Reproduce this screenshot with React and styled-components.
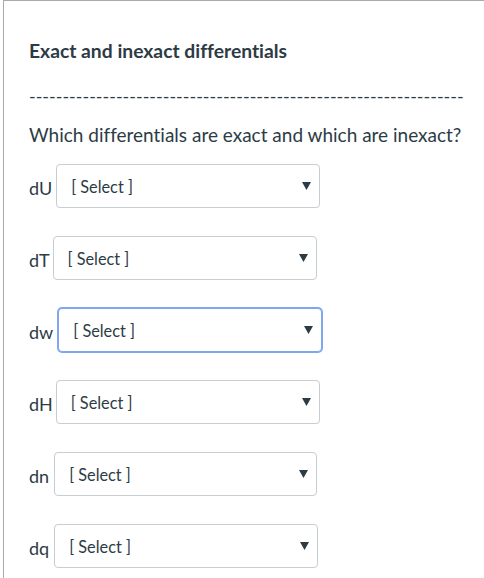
import React from "react";
import styled, { createGlobalStyle } from "styled-components";

const Global = createGlobalStyle`
  html, body { margin: 0; padding: 0; background: #fff; }
  body {
    font-family: Lato, "Noto Sans", sans-serif;
    color: #2d3b45;
    font-variant-ligatures: none;
    font-feature-settings: "liga" 0;
  }
`;

const Frame = styled.div`
  margin-left: 3px;
  border-left: 1px solid #aaaaaa;
  border-top: 1px solid #aaaaaa;
  padding: 38px 0 20px 25px;
  min-height: 539px;
`;

const Title = styled.h2`
  margin: 0;
  font-size: 19.3px;
  font-weight: 700;
  line-height: 24px;
  color: #2d3b45;
`;

const Dashes = styled.div`
  margin-top: 21px;
  font-size: 18px;
  line-height: 24px;
  white-space: nowrap;
`;

const Question = styled.p`
  margin: 15px 0 0;
  font-size: 19px;
  line-height: 24px;
`;

const Rows = styled.div`
  margin-top: 17px;
  display: flex;
  flex-direction: column;
  gap: 28px;
`;

const Row = styled.div`
  display: flex;
  align-items: center;
  gap: ${(p) => p.$gap}px;
`;

const Label = styled.span`
  font-size: 18px;
  line-height: 24px;
  padding-top: 4px;
`;

const SelectBox = styled.div`
  box-sizing: border-box;
  width: ${(p) => p.$w}px;
  height: 44px;
  border: 1px solid ${(p) => (p.$focus ? "#7fa7f0" : "#c7cdd1")};
  box-shadow: ${(p) => (p.$focus ? "0 0 0 1px #7fa7f0" : "none")};
  border-radius: 4px;
  background: #fff;
  display: flex;
  align-items: center;
  justify-content: space-between;
  padding: 0 8px 0 14px;
  font-size: 16.3px;
`;

const SelectText = styled.span`
  line-height: 20px;
  padding-top: 1px;
`;

const Arrow = () => (
  <svg width="9" height="8" viewBox="0 0 9 8">
    <polygon points="0,0 9,0 4.5,8" fill="#2d3b45" />
  </svg>
);

const items = [
  { l: "dU", gap: 4, w: 264 },
  { l: "dT", gap: 3, w: 264 },
  { l: "dw", gap: 5, w: 264, focus: true },
  { l: "dH", gap: 3, w: 264 },
  { l: "dn", gap: 5, w: 263 },
  { l: "dq", gap: 5, w: 264 },
];

export default function App() {
  return (
    <>
      <Global />
      <Frame>
        <Title>Exact and inexact differentials</Title>
        <Dashes>{"-".repeat(65)}</Dashes>
        <Question>Which differentials are exact and which are inexact?</Question>
        <Rows>
          {items.map((it) => (
            <Row key={it.l} $gap={it.gap}>
              <Label>{it.l}</Label>
              <SelectBox $w={it.w} $focus={it.focus}>
                <SelectText>[ Select ]</SelectText>
                <Arrow />
              </SelectBox>
            </Row>
          ))}
        </Rows>
      </Frame>
    </>
  );
}
